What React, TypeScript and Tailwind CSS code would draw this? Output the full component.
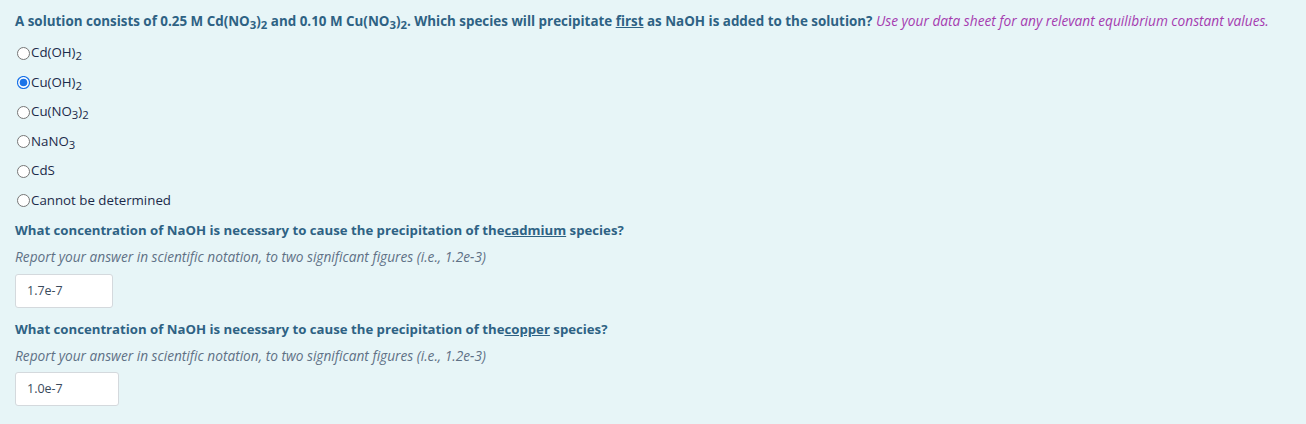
import React from "react";

const Radio = ({ checked }: { checked?: boolean }) => (
  <span className="inline-flex items-center justify-center w-[13px] h-[13px] mr-[1px] shrink-0">
    {checked ? (
      <svg width="13" height="13" viewBox="0 0 13 13">
        <circle cx="6.5" cy="6.5" r="6" fill="#ffffff" stroke="#1a73e8" strokeWidth="1.2" />
        <circle cx="6.5" cy="6.5" r="3.8" fill="#1a73e8" />
      </svg>
    ) : (
      <svg width="13" height="13" viewBox="0 0 13 13">
        <circle cx="6.5" cy="6.5" r="6" fill="#ffffff" stroke="#767676" strokeWidth="1" />
      </svg>
    )}
  </span>
);

const Sub = ({ children }: { children: React.ReactNode }) => (
  <span className="text-[0.85em] relative top-[3px]">{children}</span>
);

const options: { label: React.ReactNode; checked?: boolean }[] = [
  { label: <>Cd(OH)<Sub>2</Sub></> },
  { label: <>Cu(OH)<Sub>2</Sub></>, checked: true },
  { label: <>Cu(NO<Sub>3</Sub>)<Sub>2</Sub></> },
  { label: <>NaNO<Sub>3</Sub></> },
  { label: <>CdS</> },
  { label: <>Cannot be determined</> },
];

export default function App() {
  return (
    <div
      className="w-[1306px] h-[424px] bg-[#e7f5f7] pl-[15px] pt-[12px] text-[13px]"
      style={{ fontFamily: '"Open Sans", "Noto Sans", sans-serif' }}
    >
      <div className="font-bold text-[#2e6284] leading-[18px] text-[13.4px] whitespace-nowrap">
        A solution consists of 0.25 M Cd(NO<Sub>3</Sub>)<Sub>2</Sub> and 0.10 M Cu(NO<Sub>3</Sub>)<Sub>2</Sub>. Which species will precipitate <span className="underline">first</span> as NaOH is added to the solution?{" "}
        <span className="italic font-normal text-[#a53bb0] text-[13.7px]">Use your data sheet for any relevant equilibrium constant values.</span>
      </div>
      <div className="flex flex-col gap-[11.6px] mt-[13px] pl-[2px]">
        {options.map((o, i) => (
          <div key={i} className="flex items-center h-[18px] text-[#1c2b4a] text-[13.3px]">
            <Radio checked={o.checked} />
            <span>{o.label}</span>
          </div>
        ))}
      </div>
      <div className="mt-[11px] font-bold text-[#2e6284] leading-[18px] text-[13.2px]">
        What concentration of NaOH is necessary to cause the precipitation of the<span className="underline">cadmium</span> species?
      </div>
      <div className="mt-[9px] italic text-[#5f7186] leading-[18px] text-[13.7px]">
        Report your answer in scientific notation, to two significant figures (i.e., 1.2e-3)
      </div>
      <div className="mt-[8px] w-[98px] h-[34px] bg-white border border-[#d4d9dd] rounded-[3px] flex items-center pl-[11px] text-[12.5px] text-[#3a4a5c]">
        1.7e-7
      </div>
      <div className="mt-[12px] font-bold text-[#2e6284] leading-[18px] text-[13.2px]">
        What concentration of NaOH is necessary to cause the precipitation of the<span className="underline">copper</span> species?
      </div>
      <div className="mt-[9px] italic text-[#5f7186] leading-[18px] text-[13.7px]">
        Report your answer in scientific notation, to two significant figures (i.e., 1.2e-3)
      </div>
      <div className="mt-[7px] w-[104px] h-[34px] bg-white border border-[#d4d9dd] rounded-[3px] flex items-center pl-[11px] text-[12.5px] text-[#3a4a5c]">
        1.0e-7
      </div>
    </div>
  );
}
